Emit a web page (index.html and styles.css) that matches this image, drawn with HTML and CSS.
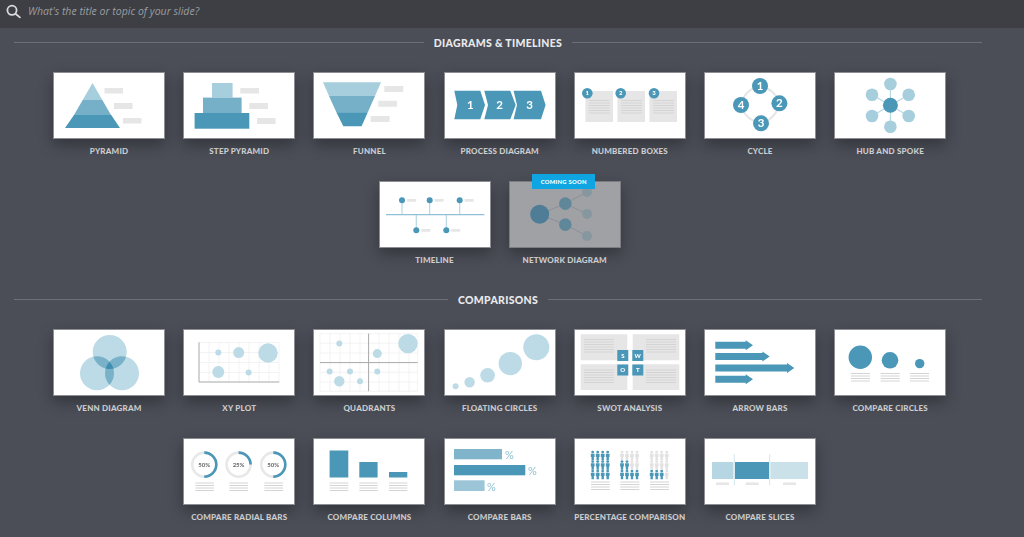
FILE: index.html
```html
<!DOCTYPE html>
<html lang="en">
<head>
<meta charset="utf-8">
<title>New slide</title>
<link rel="stylesheet" href="styles.css">
</head>
<body>
<svg class="defs" width="0" height="0" aria-hidden="true">
  <symbol id="person" viewBox="-4 -6.500 8 14.500" overflow="visible">
    <circle cx="0" cy="-3.800" r="1.900"/>
    <path d="M-2.500-1.500h5v4.200h-.9v4.300h-3.200v-4.300h-.9z"/>
  </symbol>
  <clipPath id="clip-top"><circle cx="56.700" cy="23" r="17"/></clipPath>
  <clipPath id="clip-left"><circle cx="44" cy="44.300" r="17"/></clipPath>
  <clipPath id="clip-right"><circle cx="69" cy="44.300" r="17"/></clipPath>
</svg>
<header class="search">
  <svg class="search-icon" viewBox="0 0 22 22"><circle cx="12" cy="10.300" r="4.600"/><path d="M15.500 13.800l4.400 3.600"/></svg>
  <span class="search-text">What's the title or topic of your slide?</span>
</header>
<main>
  <section>
    <h2 class="heading">DIAGRAMS &amp; TIMELINES</h2>
    <div class="grid">
      <figure class="item"><div class="card"><svg viewBox="0 0 112 67">
        <path class="b3" d="M39.500 11l9.800 17h-19.600z"/><path class="b2" d="M29.700 28h19.600l8.700 15h-37z"/><path class="b1" d="M21 43h37.200l8.800 13h-55z"/>
        <path class="gy" d="M51.500 16h18.500v5.500h-18.500zM61 31h18.500v6h-18.500zM70 46h18.500v5.500h-18.500z"/>
      </svg></div><figcaption>PYRAMID</figcaption></figure>

      <figure class="item"><div class="card"><svg viewBox="0 0 112 67">
        <rect class="b3" x="29" y="11" width="20.600" height="14.600"/><rect class="b2" x="20" y="25.600" width="38.600" height="15.400"/><rect class="b1" x="11.600" y="41" width="54.700" height="15.700"/>
        <path class="gy" d="M57.300 16h18.700v5.600h-18.700zM66.300 31h18.700v6h-18.700zM74 46h18.600v6h-18.600z"/>
      </svg></div><figcaption>STEP PYRAMID</figcaption></figure>

      <figure class="item"><div class="card"><svg viewBox="0 0 112 67">
        <path class="b3" d="M10 10.300h58l-6 13.700h-46z"/><path class="b2" d="M16 24h46l-7.200 16.300h-31.400z"/><path class="b1" d="M23.400 40.300h31.400l-6.200 14h-18.300z"/>
        <path class="gy" d="M71.300 14h19v6h-19zM65.300 28.700h18.700v6h-18.700zM57.600 44h19v6h-19z"/>
      </svg></div><figcaption>FUNNEL</figcaption></figure>

      <figure class="item"><div class="card"><svg viewBox="0 0 112 67">
        <path class="b1" d="M10.300 18.700h26l4.700 14.300-4.700 14.300h-26l3-14.300zM40.300 18.700h26l5.400 14.300-5.400 14.300h-26l3.700-14.300zM69.600 18.700h27.400l4.600 14.300-4.600 14.300h-27.400l3.400-14.300z"/>
        <text class="num" x="26.300" y="37">1</text><text class="num" x="55.600" y="37">2</text><text class="num" x="85.600" y="37">3</text>
      </svg></div><figcaption>PROCESS DIAGRAM</figcaption></figure>

      <figure class="item"><div class="card"><svg viewBox="0 0 112 67">
        <path class="gy" d="M11.400 19h27.600v31h-27.600zM43.400 19h27.600v31h-27.600zM75.400 19h27.600v31h-27.600z"/>
        <path class="ln" d="M14.700 28.500h21M14.700 31h21M14.700 33.500h21M14.700 36h21M14.700 38.500h21M14.700 41h21M47 28.500h21M47 31h21M47 33.500h21M47 36h21M47 38.500h21M47 41h21M79 28.500h21M79 31h21M79 33.500h21M79 36h21M79 38.500h21M79 41h21"/>
        <circle class="b1" cx="13.300" cy="21.300" r="5.300"/><circle class="b1" cx="46.700" cy="21.300" r="5.300"/><circle class="b1" cx="80" cy="21.300" r="5.300"/>
        <text class="tiny" x="13.300" y="23.300">1</text><text class="tiny" x="46.700" y="23.300">2</text><text class="tiny" x="80" y="23.300">3</text>
      </svg></div><figcaption>NUMBERED BOXES</figcaption></figure>

      <figure class="item"><div class="card"><svg viewBox="0 0 112 67">
        <path class="ring" d="M56 14Q71 17 75.400 31.300Q72 47 57 51.300Q41 48 37 33Q40 18 56 14z"/>
        <circle class="b1" cx="56" cy="14" r="8"/><circle class="b1" cx="75.400" cy="31.300" r="8"/><circle class="b1" cx="57" cy="51.300" r="8"/><circle class="b1" cx="37" cy="33" r="8"/>
        <text class="num" x="56" y="18">1</text><text class="num" x="75.400" y="35.300">2</text><text class="num" x="57" y="55.300">3</text><text class="num" x="37" y="37">4</text>
      </svg></div><figcaption>CYCLE</figcaption></figure>

      <figure class="item"><div class="card"><svg viewBox="0 0 112 67">
        <path class="spoke" d="M56.400 12v42.700M38 22.700l36.700 21.300M74.700 22.700l-36.700 21.300"/>
        <circle class="b3" cx="56.400" cy="12" r="6.300"/><circle class="b3" cx="74.700" cy="22.700" r="6.300"/><circle class="b3" cx="74.700" cy="44" r="6.300"/><circle class="b3" cx="56.400" cy="54.700" r="6.300"/><circle class="b3" cx="38" cy="44" r="6.300"/><circle class="b3" cx="38" cy="22.700" r="6.300"/>
        <circle class="b1" cx="56.400" cy="33.300" r="7.500"/>
      </svg></div><figcaption>HUB AND SPOKE</figcaption></figure>

      <figure class="item"><div class="card"><svg viewBox="0 0 112 67">
        <path class="spoke" d="M23 19v14M50.700 19v14M80.700 19v14M37.300 34v15M67.300 34v15"/>
        <path class="axis" d="M7 33.600h98.300"/>
        <circle class="b1" cx="23" cy="19.300" r="3"/><circle class="b1" cx="50.700" cy="19.300" r="3"/><circle class="b1" cx="80.700" cy="19.300" r="3"/><circle class="b1" cx="37.300" cy="49.300" r="3"/><circle class="b1" cx="67.300" cy="49.300" r="3"/>
        <path class="gy" d="M28 18h9v2.800h-9zM55.600 18h9v2.800h-9zM85.600 18h9v2.800h-9zM42.300 48h9v2.800h-9zM72.300 48h9v2.800h-9z"/>
      </svg></div><figcaption>TIMELINE</figcaption></figure>

      <figure class="item"><div class="card card-soon"><svg viewBox="0 0 112 67">
        <path class="net-line" d="M30.700 33.300L56.300 22.600L78 11M30.700 33.300L56.300 43.600L78 55M56.300 22.600L78 33"/>
        <circle class="n3" cx="78" cy="11" r="5"/><circle class="n3" cx="78" cy="33" r="5"/><circle class="n3" cx="78" cy="55" r="5"/>
        <circle class="n2" cx="56.300" cy="22.600" r="6.300"/><circle class="n2" cx="56.300" cy="43.600" r="6.300"/>
        <circle class="n1" cx="30.700" cy="33.300" r="9.500"/>
      </svg><span class="badge">COMING SOON</span></div><figcaption>NETWORK DIAGRAM</figcaption></figure>
    </div>
  </section>

  <section>
    <h2 class="heading">COMPARISONS</h2>
    <div class="grid">
      <figure class="item"><div class="card"><svg viewBox="0 0 112 67">
        <circle class="b4" cx="56.700" cy="23" r="17"/><circle class="b4" cx="44" cy="44.300" r="17"/><circle class="b4" cx="69" cy="44.300" r="17"/>
        <g clip-path="url(#clip-top)"><circle class="v2" cx="44" cy="44.300" r="17"/><circle class="v2" cx="69" cy="44.300" r="17"/></g>
        <g clip-path="url(#clip-left)"><circle class="v2" cx="69" cy="44.300" r="17"/></g>
        <g clip-path="url(#clip-top)"><g clip-path="url(#clip-left)"><circle class="v3" cx="69" cy="44.300" r="17"/></g></g>
      </svg></div><figcaption>VENN DIAGRAM</figcaption></figure>

      <figure class="item"><div class="card"><svg viewBox="0 0 112 67">
        <path class="grid-ln" d="M26 13.500v39.500M36 13.500v39.500M46 13.500v39.500M56 13.500v39.500M66 13.500v39.500M76 13.500v39.500M86 13.500v39.500M96 13.500v39.500M16 13.500h80M16 23.500h80M16 33.500h80M16 43.500h80"/>
        <path class="plot-axis" d="M16 13.300v39.700h80.300"/>
        <circle class="b4" cx="35.300" cy="23.600" r="3"/><circle class="b4" cx="55.700" cy="23.600" r="5.500"/><circle class="b4" cx="85" cy="24" r="9.700"/><circle class="b4" cx="35.300" cy="43" r="6"/><circle class="b4" cx="65.600" cy="43.600" r="3"/>
      </svg></div><figcaption>XY PLOT</figcaption></figure>

      <figure class="item"><div class="card"><svg viewBox="0 0 112 67">
        <path class="grid-ln" d="M7 4.600v57.700M17 4.600v57.700M27 4.600v57.700M37 4.600v57.700M47 4.600v57.700M66 4.600v57.700M76 4.600v57.700M86 4.600v57.700M96 4.600v57.700M104.600 4.600v57.700M7 4.600h97.600M7 14.200h97.600M7 24h97.600M7 43.300h97.600M7 53h97.600M7 62.300h97.600"/>
        <path class="plot-axis" d="M55.600 4.600v57.700M7 33.600h97.600"/>
        <circle class="b4" cx="26.300" cy="14.600" r="3"/><circle class="b4" cx="64.300" cy="24.600" r="4.500"/><circle class="b4" cx="95" cy="14.600" r="9.700"/><circle class="b4" cx="16.600" cy="42.600" r="3"/><circle class="b4" cx="37" cy="42.600" r="3"/><circle class="b4" cx="64.300" cy="42.600" r="3"/><circle class="b4" cx="26.300" cy="52.300" r="5.200"/><circle class="b4" cx="47" cy="52.300" r="3"/>
      </svg></div><figcaption>QUADRANTS</figcaption></figure>

      <figure class="item"><div class="card"><svg viewBox="0 0 112 67">
        <circle class="b4" cx="92.300" cy="18.300" r="13"/><circle class="b4" cx="66.300" cy="34.600" r="11.700"/><circle class="b4" cx="43.600" cy="46.300" r="7.300"/><circle class="b4" cx="25.600" cy="53.300" r="5.200"/><circle class="b4" cx="11.600" cy="57.300" r="3"/>
      </svg></div><figcaption>FLOATING CIRCLES</figcaption></figure>

      <figure class="item"><div class="card"><svg viewBox="0 0 112 67">
        <path class="gy" d="M6.700 5.300h46.600v26h-46.600zM58.700 5.300h46.600v26h-46.600zM6.700 35.300h46.600v25.700h-46.600zM58.700 35.300h46.600v25.700h-46.600z"/>
        <path class="ln" d="M10 10.500h30M10 13h30M10 15.500h30M10 18h30M10 20.500h30M10 23h30M72 10.500h30M72 13h30M72 15.500h30M72 18h30M72 20.500h30M72 23h30M10 41h30M10 43.500h30M10 46h30M10 48.500h30M10 51h30M10 53.500h30M72 41h30M72 43.500h30M72 46h30M72 48.500h30M72 51h30M72 53.500h30"/>
        <path class="b1" d="M43.300 21h11v11h-11zM58.300 21h11v11h-11zM43.300 35.600h11v11h-11zM58.300 35.600h11v11h-11z"/>
        <text class="tiny" x="48.800" y="28.500">S</text><text class="tiny" x="63.800" y="28.500">W</text><text class="tiny" x="48.800" y="43">O</text><text class="tiny" x="63.800" y="43">T</text>
      </svg></div><figcaption>SWOT ANALYSIS</figcaption></figure>

      <figure class="item"><div class="card"><svg viewBox="0 0 112 67">
        <path class="b1" d="M11.300 12.800h30.400v-1.500l7.300 5-7.300 5v-1.500h-30.400zM11.300 24.100h47.100v-1.500l7.300 5-7.300 5v-1.500h-47.100zM11.300 35.500h71.700v-1.500l7.300 5-7.300 5v-1.500h-71.700zM11.300 46.800h30.400v-1.500l7.300 5-7.300 5v-1.500h-30.400z"/>
      </svg></div><figcaption>ARROW BARS</figcaption></figure>

      <figure class="item"><div class="card"><svg viewBox="0 0 112 67">
        <circle class="b1" cx="26.300" cy="28.300" r="11.700"/><circle class="b1" cx="56" cy="31.300" r="8.300"/><circle class="b1" cx="85.700" cy="34.600" r="4.700"/>
        <path class="ln" d="M17 44.500h19M17 47h19M17 49.500h19M17 52h19M46.700 44.500h19M46.700 47h19M46.700 49.500h19M46.700 52h19M76 44.500h19M76 47h19M76 49.500h19M76 52h19"/>
      </svg></div><figcaption>COMPARE CIRCLES</figcaption></figure>

      <figure class="item"><div class="card"><svg viewBox="0 0 112 67">
        <circle class="track" cx="21.300" cy="26.600" r="12"/><circle class="track" cx="55.600" cy="26.600" r="12"/><circle class="track" cx="90.300" cy="26.600" r="12"/>
        <path class="arc" d="M21.300 14.600a12 12 0 0 1 0 24M55.600 14.600a12 12 0 0 1 12 12M90.300 14.600a12 12 0 0 1 0 24"/>
        <text class="pct" x="21.300" y="28.600">50%</text><text class="pct" x="55.600" y="28.600">25%</text><text class="pct" x="90.300" y="28.600">50%</text>
        <path class="ln" d="M12.300 45h18.700M12.300 47.500h18.700M12.300 50h18.700M12.300 52.500h18.700M46.300 45h18.700M46.300 47.500h18.700M46.300 50h18.700M46.300 52.500h18.700M81.300 45h18.700M81.300 47.500h18.700M81.300 50h18.700M81.300 52.500h18.700"/>
      </svg></div><figcaption>COMPARE RADIAL BARS</figcaption></figure>

      <figure class="item"><div class="card"><svg viewBox="0 0 112 67">
        <path class="b1" d="M16.600 12.600h18.700v27h-18.700zM46.300 24h18.300v15.600h-18.300zM76 34h18.300v5.600h-18.300z"/>
        <path class="ln" d="M16.600 45h18.700M16.600 47.500h18.700M16.600 50h18.700M16.600 52.500h18.700M46.300 45h18.300M46.300 47.500h18.300M46.300 50h18.300M46.300 52.500h18.300M76 45h18.300M76 47.500h18.300M76 50h18.300M76 52.500h18.300"/>
      </svg></div><figcaption>COMPARE COLUMNS</figcaption></figure>

      <figure class="item"><div class="card"><svg viewBox="0 0 112 67">
        <rect class="b5" x="10" y="11" width="48" height="10.300"/><rect class="b1" x="10" y="27" width="71.300" height="10.300"/><rect class="b6" x="10" y="42.300" width="30.600" height="10.700"/>
        <text class="pc" x="61" y="20.500">%</text><text class="pc" x="84" y="36.500">%</text><text class="pc" x="43" y="52.500">%</text>
      </svg></div><figcaption>COMPARE BARS</figcaption></figure>

      <figure class="item"><div class="card"><svg viewBox="0 0 112 67">
        <g class="ppl-b">
          <use href="#person" x="15.700" y="12" width="6" height="11"/><use href="#person" x="20.700" y="12" width="6" height="11"/><use href="#person" x="25.700" y="12" width="6" height="11"/><use href="#person" x="30.700" y="12" width="6" height="11"/>
          <use href="#person" x="15.700" y="21.500" width="6" height="11"/><use href="#person" x="20.700" y="21.500" width="6" height="11"/><use href="#person" x="25.700" y="21.500" width="6" height="11"/><use href="#person" x="30.700" y="21.500" width="6" height="11"/>
          <use href="#person" x="15.700" y="31" width="6" height="11"/><use href="#person" x="20.700" y="31" width="6" height="11"/><use href="#person" x="25.700" y="31" width="6" height="11"/><use href="#person" x="30.700" y="31" width="6" height="11"/>
          <use href="#person" x="45" y="21.500" width="6" height="11"/><use href="#person" x="50" y="21.500" width="6" height="11"/>
          <use href="#person" x="45" y="31" width="6" height="11"/><use href="#person" x="50" y="31" width="6" height="11"/><use href="#person" x="55" y="31" width="6" height="11"/><use href="#person" x="60" y="31" width="6" height="11"/>
          <use href="#person" x="74.700" y="31" width="6" height="11"/><use href="#person" x="79.700" y="31" width="6" height="11"/><use href="#person" x="84.700" y="31" width="6" height="11"/>
        </g>
        <g class="ppl-g">
          <use href="#person" x="45" y="12" width="6" height="11"/><use href="#person" x="50" y="12" width="6" height="11"/><use href="#person" x="55" y="12" width="6" height="11"/><use href="#person" x="60" y="12" width="6" height="11"/>
          <use href="#person" x="55" y="21.500" width="6" height="11"/><use href="#person" x="60" y="21.500" width="6" height="11"/>
          <use href="#person" x="74.700" y="12" width="6" height="11"/><use href="#person" x="79.700" y="12" width="6" height="11"/><use href="#person" x="84.700" y="12" width="6" height="11"/><use href="#person" x="89.700" y="12" width="6" height="11"/>
          <use href="#person" x="74.700" y="21.500" width="6" height="11"/><use href="#person" x="79.700" y="21.500" width="6" height="11"/><use href="#person" x="84.700" y="21.500" width="6" height="11"/><use href="#person" x="89.700" y="21.500" width="6" height="11"/>
          <use href="#person" x="89.700" y="31" width="6" height="11"/>
        </g>
        <path class="ln" d="M17 44h18.700M17 46.500h18.700M17 49h18.700M17 51.500h18.700M46.300 44h19M46.300 46.500h19M46.300 49h19M46.300 51.500h19M76 44h19M76 46.500h19M76 49h19M76 51.500h19"/>
      </svg></div><figcaption>PERCENTAGE COMPARISON</figcaption></figure>

      <figure class="item"><div class="card"><svg viewBox="0 0 112 67">
        <path class="divider" d="M30.300 16.300v31M65.700 16.300v31"/>
        <rect class="b7" x="8" y="24" width="21.400" height="17"/><rect class="b1" x="31" y="24" width="34" height="17"/><rect class="b8" x="66.400" y="24" width="37.600" height="17"/>
        <path class="gy" d="M12 44.600h13v2.400h-13zM41.700 44.600h13v2.400h-13zM79 44.600h13v2.400h-13z"/>
      </svg></div><figcaption>COMPARE SLICES</figcaption></figure>
    </div>
  </section>
</main>
</body>
</html>
```
FILE: styles.css
```css
* { box-sizing: border-box; }
html, body { margin: 0; height: 100%; }
body {
  background: #4b4e57;
  overflow: hidden;
  font-family: Lato, "Liberation Sans", sans-serif;
}
.defs { position: absolute; }

.search {
  height: 28px;
  background: #3d3f44;
  display: flex;
  align-items: center;
}
.search-icon {
  width: 22px;
  height: 22px;
  margin: 0 6px 0 0;
  align-self: flex-start;
  fill: none;
  stroke: #d9dadc;
  stroke-width: 1.800;
  stroke-linecap: round;
}
.search-text {
  font-family: "Open Sans", "Liberation Sans", sans-serif;
  font-style: italic;
  font-size: 10.500px;
  color: #9b9da1;
  margin-bottom: 7px;
}

main { padding: 5px 42px 0 14px; }

.heading {
  margin: 0 0 19px;
  height: 20px;
  padding-bottom: 1px;
  display: flex;
  align-items: center;
  gap: 10px;
  font-size: 10.500px;
  font-weight: 900;
  letter-spacing: .3px;
  color: #e9e9eb;
}
.heading::before, .heading::after {
  content: "";
  flex: 1;
  height: 1px;
  background: #6d6f76;
}

.grid {
  margin-left: 38.900px;
  width: 893.500px;
  display: flex;
  flex-wrap: wrap;
  justify-content: center;
  column-gap: 18.200px;
}
.item { margin: 0; width: 112px; height: 109px; }
.card {
  position: relative;
  width: 112px;
  height: 67px;
  background: #fff;
  border: 1px solid #8d8e93;
  box-shadow: 0 6px 14px rgba(0, 0, 0, .32);
}
.card svg {
  display: block;
  width: 112px;
  height: 67px;
  margin: -1px;
  filter: blur(.3px);
}
.card-soon { background: #a0a1a5; border-color: #7c7d82; }
.badge {
  position: absolute;
  left: 22.500px;
  top: -8.500px;
  width: 63px;
  height: 15px;
  background: #0fa5e3;
  color: #fff;
  font-size: 5.800px;
  font-weight: 900;
  letter-spacing: .3px;
  line-height: 15px;
  text-align: center;
}
figcaption {
  margin-top: 7px;
  line-height: 11px;
  font-size: 8px;
  font-weight: 900;
  letter-spacing: .2px;
  color: #d9dadc;
  text-align: center;
  white-space: nowrap;
}

.b1 { fill: #4a97b8; }
.b2 { fill: #75afc8; }
.b3 { fill: #a6cedd; }
.b4 { fill: #bcdbe6; }
.b5 { fill: #7fb4cb; }
.b6 { fill: #9cc6d8; }
.b7 { fill: #b5d6e2; }
.b8 { fill: #cbe1ea; }
.v2 { fill: #79b1c8; }
.v3 { fill: #3f8fb0; }
.gy { fill: #e6e6e6; }
.ln { fill: none; stroke: #d4d4d4; stroke-width: 1; }
.ring { fill: none; stroke: #e6e6e6; stroke-width: 2; }
.spoke { fill: none; stroke: #b8d8e4; stroke-width: 1.200; }
.axis { fill: none; stroke: #8fc0d3; stroke-width: 1.300; }
.grid-ln { fill: none; stroke: #f0f0f0; stroke-width: .8; }
.plot-axis { fill: none; stroke: #a8a8a8; stroke-width: 1; }
.track { fill: none; stroke: #e8e8e8; stroke-width: 2.600; }
.arc { fill: none; stroke: #4a97b8; stroke-width: 2.600; }
.divider { fill: none; stroke: #c4dfe9; stroke-width: .8; }
.net-line { fill: none; stroke: #8a9197; stroke-width: 1; }
.n1 { fill: #4f7d97; }
.n2 { fill: #5f8799; }
.n3 { fill: #87979f; }
.ppl-b { fill: #4a97b8; }
.ppl-g { fill: #e2e2e2; }

.num, .tiny, .pct, .pc { text-anchor: middle; font-family: Lato, sans-serif; }
.num { fill: #fff; font-size: 11.500px; font-weight: 700; }
.tiny { fill: #fff; font-size: 6px; font-weight: 900; }
.pct { fill: #666; font-size: 6px; font-weight: 700; }
.pc { fill: #8fc0d3; font-size: 11px; text-anchor: start; }
```
